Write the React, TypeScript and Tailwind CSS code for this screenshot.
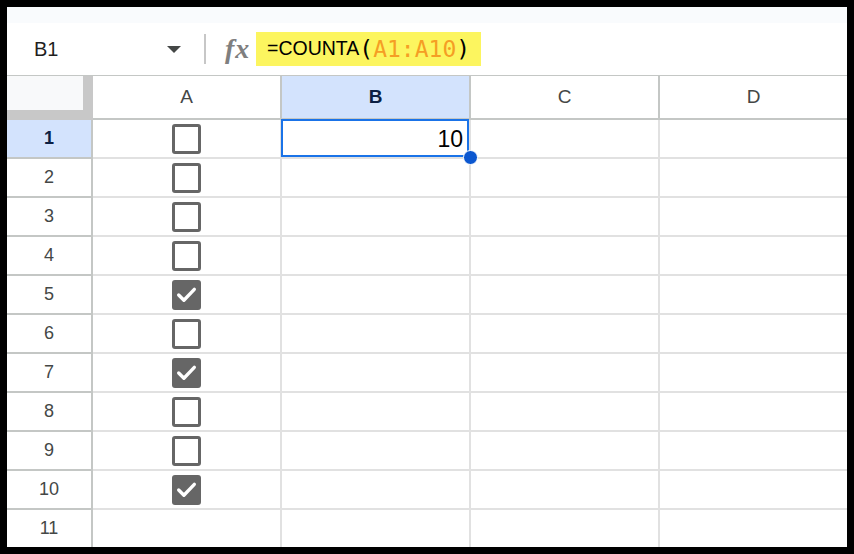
import React from "react";

const COLS = ["A", "B", "C", "D"];
const CHECKED = [5, 7, 10];
const ROWS = Array.from({ length: 11 }, (_, i) => i + 1);

function Checkbox({ checked }: { checked: boolean }) {
  if (checked) {
    return (
      <div className="w-[29px] h-[30px] rounded-[3px] bg-[#666666] flex items-center justify-center">
        <svg width="25" height="25" viewBox="0 0 24 24" fill="none">
          <path d="M4.5 12.5 L9.5 17.5 L19.5 7" stroke="white" strokeWidth="3.2" strokeLinecap="round" strokeLinejoin="round" />
        </svg>
      </div>
    );
  }
  return <div className="w-[29px] h-[30px] rounded-[3px] border-[3.5px] border-[#666666] bg-white" />;
}

export default function App() {
  return (
    <div className="w-[854px] h-[554px] bg-black p-[7px] font-['Liberation_Sans',Arial,sans-serif]">
      <div className="w-[840px] h-[540px] bg-white overflow-hidden flex flex-col">
        {/* top strip */}
        <div className="h-[16px] shrink-0 bg-[#f9fbfd]" />

        {/* formula bar */}
        <div className="h-[53px] shrink-0 border-b border-[#c4c7c5] flex items-center">
          <div className="w-[197px] pl-[27px] pr-[23px] flex items-center justify-between">
            <span className="text-[20px] text-[#1f1f1f]">B1</span>
            <svg width="14" height="7" viewBox="0 0 14 7">
              <path d="M0 0 L14 0 L7 7 Z" fill="#444746" />
            </svg>
          </div>
          <div className="w-[2px] h-[30px] bg-[#c7c7c7]" />
          <span className="ml-[19px] w-[31px] text-[28px] italic font-semibold tracking-[1px] text-[#7f7f7f] font-['Liberation_Serif',serif] leading-none">fx</span>
          <div className="h-[34px] w-[225px] bg-[#fcf55f] flex items-center pl-[11px]">
            <span className="text-[19.5px] text-black">=COUNTA</span>
            <span className="text-[23px] font-['DejaVu_Sans_Mono',monospace]">
              <span className="text-black">(</span>
              <span className="text-[#f59e24]">A1:A10</span>
              <span className="text-black">)</span>
            </span>
          </div>
        </div>

        {/* grid */}
        <div className="grid grid-cols-[86px_189px_189px_189px_189px] auto-rows-[39px] grid-rows-[44px]">
          <div className="bg-[#c8c8c8]">
            <div className="w-[76px] h-[34px] bg-[#f8f9fa]" />
          </div>
          {COLS.map((c) => (
            <div
              key={c}
              className={`border-r-2 border-b-2 border-[#c4c7c5] flex items-center justify-center text-[19px] ${
                c === "B" ? "bg-[#d3e3fd] text-[#0b1f44] font-bold" : "bg-white text-[#444746]"
              }`}
            >
              {c}
            </div>
          ))}

          {ROWS.map((r) => (
            <React.Fragment key={r}>
              <div
                className={`border-r-2 border-b-2 border-[#c4c7c5] flex items-center justify-center text-[18px] ${
                  r === 1 ? "bg-[#d3e3fd] text-[#0b1f44] font-bold" : "bg-white text-[#444746]"
                }`}
              >
                {r}
              </div>
              <div className="border-r-2 border-b-2 border-[#e1e1e1] flex items-center justify-center">
                {r <= 10 && <Checkbox checked={CHECKED.includes(r)} />}
              </div>
              <div className="relative border-r-2 border-b-2 border-[#e1e1e1] flex items-end justify-end pr-[6px] pb-[6px]">
                {r === 1 && (
                  <>
                    <span className="text-[23px] leading-none text-black">10</span>
                    <div className="absolute left-[-1px] top-[-1px] right-0 bottom-0 border-2 border-[#1a73e8]" />
                    <div className="absolute right-[-9px] bottom-[-8px] z-10 w-[15px] h-[15px] rounded-full bg-[#0b57d0] border-[1.5px] border-white" />
                  </>
                )}
              </div>
              <div className="border-r-2 border-b-2 border-[#e1e1e1]" />
              <div className="border-r-2 border-b-2 border-[#e1e1e1]" />
            </React.Fragment>
          ))}
        </div>
      </div>
    </div>
  );
}
